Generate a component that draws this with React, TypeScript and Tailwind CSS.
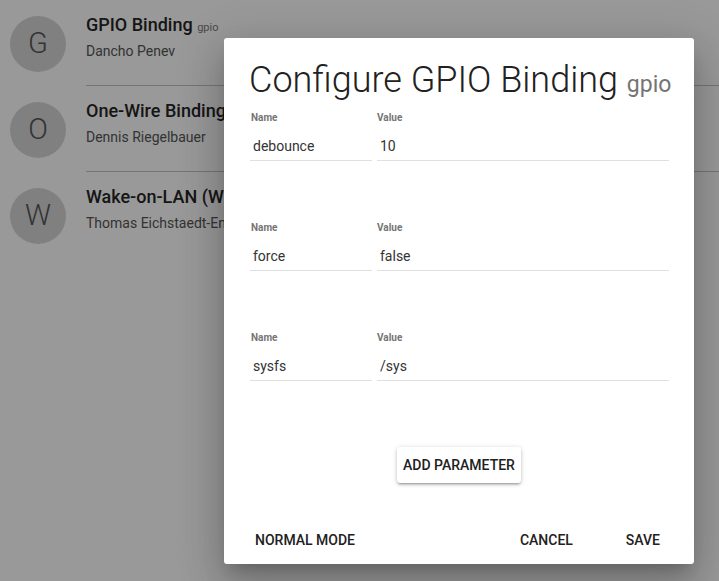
import React from 'react';

const bindings = [
  { letter: 'G', name: 'GPIO Binding', id: 'gpio', author: 'Dancho Penev' },
  { letter: 'O', name: 'One-Wire Binding', id: 'onewire', author: 'Dennis Riegelbauer' },
  { letter: 'W', name: 'Wake-on-LAN (WoL) Binding', id: 'wol', author: 'Thomas Eichstaedt-Engelen' },
];

const params = [
  { name: 'debounce', value: '10' },
  { name: 'force', value: 'false' },
  { name: 'sysfs', value: '/sys' },
];

const BindingRow = ({ letter, name, id, author, last }: (typeof bindings)[number] & { last: boolean }) => (
  <div className="flex h-[86px]">
    <div className="ml-[10px] mt-[16px] flex h-[56px] w-[56px] shrink-0 items-center justify-center rounded-full bg-[#d6d6d6] text-[29px] font-light text-[#555]">
      {letter}
    </div>
    <div className={`ml-[20px] flex flex-1 flex-col ${last ? '' : 'border-b border-[#c4c4c4]'}`}>
      <div className="mt-[14px] whitespace-nowrap text-[18px] leading-[22px] font-medium text-[#262626]">
        {name} <span className="text-[11px] font-normal text-[#7a7a7a]">{id}</span>
      </div>
      <div className="mt-[2px] whitespace-nowrap text-[14px] leading-[20px] text-[#555]">{author}</div>
    </div>
  </div>
);

const ParamRow = ({ name, value }: (typeof params)[number]) => (
  <div className="flex h-[110px] gap-[5px]">
    <div className="flex w-[122px] flex-col">
      <label className="ml-[1px] text-[10px] leading-[12px] font-bold text-[#757575]">Name</label>
      <div className="mt-[12px] border-b border-[#e0e0e0] pb-[4px] pl-[3px] text-[14px] leading-[20px] text-[#333]">
        {name}
      </div>
    </div>
    <div className="flex flex-1 flex-col">
      <label className="text-[10px] leading-[12px] font-bold text-[#757575]">Value</label>
      <div className="mt-[12px] border-b border-[#e0e0e0] pb-[4px] pl-[3px] text-[14px] leading-[20px] text-[#333]">
        {value}
      </div>
    </div>
  </div>
);

export default function App() {
  return (
    <div className="relative h-[581px] w-[719px] overflow-hidden bg-white font-['Roboto',sans-serif]">
      <div className="flex flex-col">
        {bindings.map((b, i) => (
          <BindingRow key={b.id} {...b} last={i === bindings.length - 1} />
        ))}
      </div>

      <div className="absolute inset-0 bg-black/40" />

      <div className="absolute left-[224px] top-[38px] flex h-[526px] w-[470px] flex-col rounded-[3px] bg-white shadow-[0_11px_15px_-7px_rgba(0,0,0,0.2),0_24px_38px_3px_rgba(0,0,0,0.14),0_9px_46px_8px_rgba(0,0,0,0.12)]">
        <h2 className="mt-[24px] ml-[25px] whitespace-nowrap text-[36px] leading-[36px] font-light text-[#212121]">
          Configure GPIO Binding <span className="text-[23px] font-normal text-[#757575]">gpio</span>
        </h2>

        <div className="mt-[9px] ml-[26px] mr-[25px] flex flex-col">
          {params.map((p) => (
            <ParamRow key={p.name} {...p} />
          ))}
        </div>

        <div className="mt-[5px] flex justify-center">
          <button className="h-[36px] rounded-[3px] bg-white px-[6px] text-[14px] font-medium text-[#212121] shadow-[0_1px_5px_rgba(0,0,0,0.2),0_2px_2px_rgba(0,0,0,0.14),0_3px_1px_-2px_rgba(0,0,0,0.12)]">
            ADD PARAMETER
          </button>
        </div>

        <div className="mt-[47px] flex items-center text-[14px] leading-[20px] font-medium text-[#212121]">
          <button className="ml-[31px]">NORMAL MODE</button>
          <button className="ml-auto">CANCEL</button>
          <button className="ml-[53px] mr-[34px]">SAVE</button>
        </div>
      </div>
    </div>
  );
}
